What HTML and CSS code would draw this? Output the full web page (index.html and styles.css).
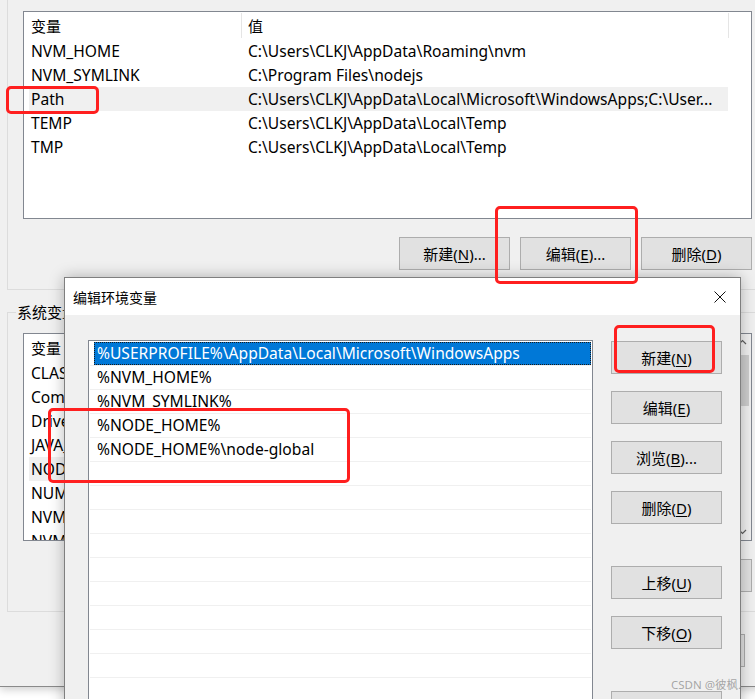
FILE: index.html
```html
<!DOCTYPE html>
<html lang="zh-CN">
<head>
    <meta charset="UTF-8">
    <title>编辑环境变量</title>
    <link rel="stylesheet" href="styles.css">
</head>
<body>
    <div class="desk">

        <!-- parent window: 环境变量 -->
        <div class="env-window">
            <div class="group group-user">
                <span class="group-label">CLKJ 的用户变量(U)</span>
                <div class="listview">
                    <div class="lv-main">
                        <div class="lv-head">
                            <div class="lv-hcell c1">变量</div>
                            <div class="lv-hcell c2">值</div>
                        </div>
                        <div class="lv-row"><span class="c1">NVM_HOME</span><span class="c2">C:\Users\CLKJ\AppData\Roaming\nvm</span></div>
                        <div class="lv-row"><span class="c1">NVM_SYMLINK</span><span class="c2">C:\Program Files\nodejs</span></div>
                        <div class="lv-row is-picked"><span class="c1">Path</span><span class="c2">C:\Users\CLKJ\AppData\Local\Microsoft\WindowsApps;C:\User...</span></div>
                        <div class="lv-row"><span class="c1">TEMP</span><span class="c2">C:\Users\CLKJ\AppData\Local\Temp</span></div>
                        <div class="lv-row"><span class="c1">TMP</span><span class="c2">C:\Users\CLKJ\AppData\Local\Temp</span></div>
                    </div>
                </div>
                <div class="btn-row">
                    <button class="win-btn">新建(<u>N</u>)...</button>
                    <button class="win-btn">编辑(<u>E</u>)...</button>
                    <button class="win-btn">删除(<u>D</u>)</button>
                </div>
            </div>

            <div class="group group-sys">
                <span class="group-label">系统变量(S)</span>
                <div class="listview">
                    <div class="lv-main">
                        <div class="lv-head">
                            <div class="lv-hcell c1">变量</div>
                            <div class="lv-hcell c2">值</div>
                        </div>
                        <div class="lv-row"><span class="c1">CLASSPATH</span><span class="c2">.;%JAVA_HOME%\lib;%JAVA_HOME%\lib\tools.jar</span></div>
                        <div class="lv-row"><span class="c1">ComSpec</span><span class="c2">C:\Windows\system32\cmd.exe</span></div>
                        <div class="lv-row"><span class="c1">DriverData</span><span class="c2">C:\Windows\System32\Drivers\DriverData</span></div>
                        <div class="lv-row"><span class="c1">JAVA_HOME</span><span class="c2">C:\Program Files\Java\jdk1.8.0_202</span></div>
                        <div class="lv-row is-picked"><span class="c1">NODE_HOME</span><span class="c2">C:\Program Files\nodejs</span></div>
                        <div class="lv-row"><span class="c1">NUMBER_OF_PROCESSORS</span><span class="c2">8</span></div>
                        <div class="lv-row"><span class="c1">NVM_HOME</span><span class="c2">C:\Users\CLKJ\AppData\Roaming\nvm</span></div>
                        <div class="lv-row"><span class="c1">NVM_SYMLINK</span><span class="c2">C:\Program Files\nodejs</span></div>
                    </div>
                    <div class="scrollbar">
                        <svg class="sb-arrow" width="17" height="17" viewBox="0 0 17 17"><polyline points="5,10 8.5,6.5 12,10" fill="none" stroke="#606060" stroke-width="1.2"/></svg>
                        <div class="sb-track"><div class="sb-thumb"></div></div>
                        <svg class="sb-arrow" width="17" height="17" viewBox="0 0 17 17"><polyline points="5,7 8.5,10.5 12,7" fill="none" stroke="#606060" stroke-width="1.2"/></svg>
                    </div>
                </div>
                <div class="btn-row">
                    <button class="win-btn">新建(<u>W</u>)...</button>
                    <button class="win-btn">编辑(<u>I</u>)...</button>
                    <button class="win-btn">删除(<u>L</u>)</button>
                </div>
            </div>

            <div class="btn-row footer">
                <button class="win-btn">确定</button>
                <button class="win-btn">取消</button>
            </div>
        </div>

        <!-- child dialog: 编辑环境变量 -->
        <div class="dialog">
            <div class="titlebar">
                <span class="title">编辑环境变量</span>
                <svg class="close" width="12" height="12" viewBox="0 0 12 12">
                    <line x1="0.5" y1="0.5" x2="11.5" y2="11.5" stroke="#111" stroke-width="1"/>
                    <line x1="11.5" y1="0.5" x2="0.5" y2="11.5" stroke="#111" stroke-width="1"/>
                </svg>
            </div>
            <div class="dlg-body">
                <div class="listbox">
                    <div class="lb-row is-selected"><span class="lb-text">%USERPROFILE%\AppData\Local\Microsoft\WindowsApps</span></div>
                    <div class="lb-row"><span class="lb-text">%NVM_HOME%</span></div>
                    <div class="lb-row"><span class="lb-text">%NVM_SYMLINK%</span></div>
                    <div class="lb-row"><span class="lb-text">%NODE_HOME%</span></div>
                    <div class="lb-row"><span class="lb-text">%NODE_HOME%\node-global</span></div>
                    <div class="lb-row"></div>
                    <div class="lb-row"></div>
                    <div class="lb-row"></div>
                    <div class="lb-row"></div>
                    <div class="lb-row"></div>
                    <div class="lb-row"></div>
                    <div class="lb-row"></div>
                    <div class="lb-row"></div>
                    <div class="lb-row"></div>
                    <div class="lb-row"></div>
                    <div class="lb-row"></div>
                </div>
                <div class="dlg-buttons">
                    <button class="win-btn">新建(<u>N</u>)</button>
                    <button class="win-btn">编辑(<u>E</u>)</button>
                    <button class="win-btn">浏览(<u>B</u>)...</button>
                    <button class="win-btn">删除(<u>D</u>)</button>
                    <button class="win-btn spaced">上移(<u>U</u>)</button>
                    <button class="win-btn">下移(<u>O</u>)</button>
                    <button class="win-btn spaced">编辑文本(<u>T</u>)...</button>
                </div>
            </div>
        </div>

        <!-- red annotation boxes -->
        <div class="mark mark-path"></div>
        <div class="mark mark-edit"></div>
        <div class="mark mark-new"></div>
        <div class="mark mark-node"></div>

        <div class="watermark">CSDN @彼枫.</div>
    </div>
</body>
</html>
```

FILE: styles.css
```css
* {
    margin: 0;
    padding: 0;
    box-sizing: border-box;
}

body {
    background: #fff;
    font-family: "Noto Sans", "Noto Sans CJK SC", sans-serif;
    font-size: 15px;
    color: #000;
}

.desk {
    position: relative;
    width: 755px;
    height: 699px;
    overflow: hidden;
    background: #fff;
}

/* ---------- parent window ---------- */

.env-window {
    display: flex;
    flex-direction: column;
    align-items: flex-start;
    width: 790px;
    background: #f0f0f0;
    padding: 0 0 19px 7px;
    border-bottom: 1px solid #8a8a8a;
    box-shadow: 0 3px 8px rgba(0, 0, 0, 0.18);
}

.group {
    position: relative;
    border: 1px solid #dcdcdc;
    padding: 20px 15px 19px 15px;
}

.group-user {
    margin-top: -10px;
}

.group-sys {
    margin-top: 22px;
}

.group-label {
    position: absolute;
    top: -11px;
    left: 8px;
    padding: 0 1px;
    line-height: 20px;
    background: #f0f0f0;
}

.listview {
    display: flex;
    width: 729px;
    height: 208px;
    background: #fff;
    border: 1px solid #828790;
    overflow: hidden;
}

.lv-main {
    flex: 1;
}

.lv-head {
    display: flex;
    height: 27px;
    padding: 1px 0;
}

.lv-hcell {
    display: flex;
    align-items: center;
    border-right: 1px solid #e5e5e5;
}

.lv-hcell.c1 {
    width: 218px;
    padding-left: 7px;
}

.lv-hcell.c2 {
    width: 487px;
    padding-left: 6px;
}

.lv-row {
    display: flex;
    align-items: center;
    width: 699px;
    height: 24px;
    margin-left: 5px;
    font-size: 15.6px;
    white-space: nowrap;
}

.lv-row.is-picked {
    background: #f0f0f0;
}

.lv-row .c1 {
    width: 212px;
    padding-left: 2px;
    overflow: hidden;
}

.lv-row .c2 {
    width: 487px;
    padding-left: 7px;
    overflow: hidden;
    text-overflow: ellipsis;
}

.scrollbar {
    display: flex;
    flex-direction: column;
    width: 17px;
    background: #f0f0f0;
}

.sb-arrow {
    display: block;
    flex: none;
}

.sb-track {
    flex: 1;
    padding: 4px 2px 0 2px;
}

.sb-thumb {
    height: 51px;
    background: #cdcdcd;
}

.btn-row {
    display: flex;
    justify-content: flex-end;
    gap: 10px;
    margin-top: 18px;
}

.footer {
    width: 738px;
    margin-top: 22px;
}

.win-btn {
    width: 111px;
    height: 33px;
    background: #e1e1e1;
    border: 1px solid #adadad;
    font-family: "Noto Sans", "Noto Sans CJK SC", sans-serif;
    font-size: 15px;
    color: #000;
}

.win-btn u {
    text-underline-offset: 2px;
}

/* ---------- child dialog ---------- */

.dialog {
    position: absolute;
    left: 64px;
    top: 277px;
    width: 677px;
    height: 440px;
    background: #f0f0f0;
    border: 1px solid #7f7f7f;
    box-shadow: 0 0 14px rgba(0, 0, 0, 0.28);
}

.titlebar {
    display: flex;
    align-items: center;
    justify-content: space-between;
    height: 37px;
    padding: 0 14px 0 8px;
    background: #fff;
}

.title {
    font-size: 14px;
}

.dlg-body {
    display: flex;
    align-items: flex-start;
    gap: 18px;
    padding: 25px 17px 0 23px;
}

.listbox {
    width: 505px;
    height: 400px;
    padding: 1px;
    background: #fff;
    border: 1px solid #828790;
}

.lb-row {
    height: 24px;
    padding-left: 4px;
    border-bottom: 1px solid #f0f0f0;
}

.lb-text {
    display: block;
    height: 23px;
    line-height: 23px;
    padding-left: 3px;
    font-size: 15.6px;
    white-space: nowrap;
}

.lb-row.is-selected .lb-text {
    background: #0078d7;
    color: #fff;
    outline: 1px dotted #1a1a1a;
    outline-offset: -1px;
}

.dlg-buttons {
    display: flex;
    flex-direction: column;
    gap: 17px;
    margin-top: 1px;
}

.dlg-buttons .spaced {
    margin-top: 25px;
}

/* ---------- annotations ---------- */

.mark {
    position: absolute;
    border: 3px solid #ff1f1f;
    border-radius: 5px;
}

.mark-path {
    left: 6px;
    top: 86px;
    width: 93px;
    height: 28px;
}

.mark-edit {
    left: 495px;
    top: 206px;
    width: 143px;
    height: 78px;
}

.mark-new {
    left: 614px;
    top: 325px;
    width: 101px;
    height: 48px;
}

.mark-node {
    left: 48px;
    top: 408px;
    width: 302px;
    height: 75px;
}

.watermark {
    position: absolute;
    left: 671px;
    top: 676px;
    font-size: 11.5px;
    color: rgba(100, 100, 100, 0.55);
    white-space: nowrap;
}
```
